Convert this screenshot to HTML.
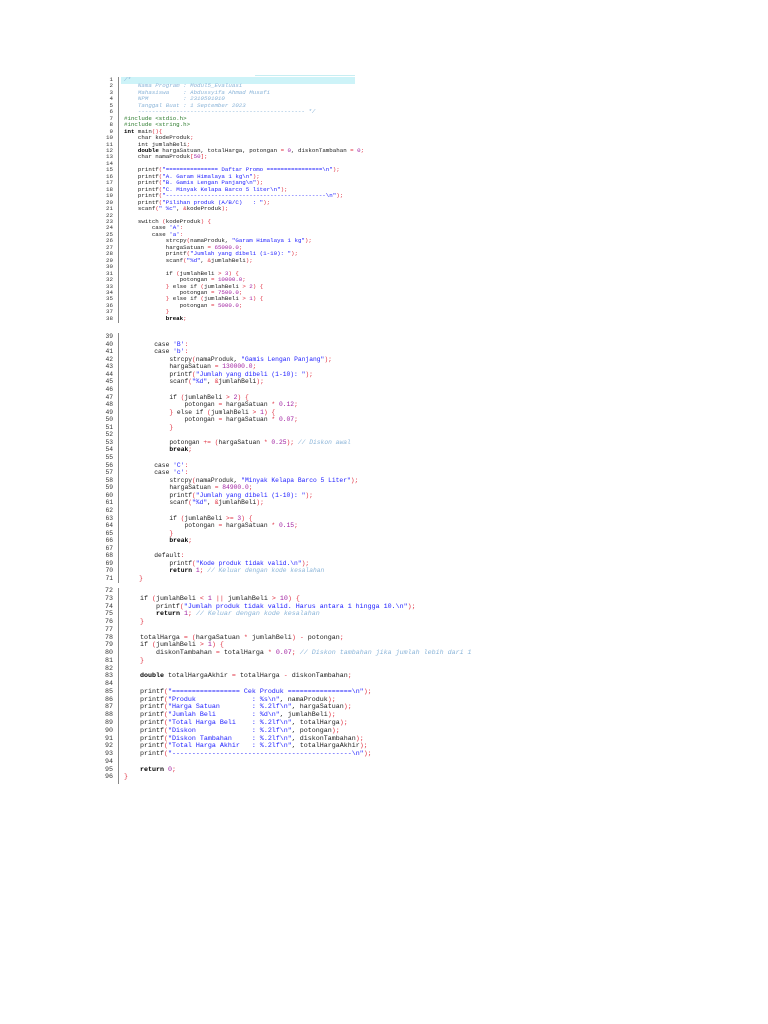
<!DOCTYPE html>
<html><head><meta charset="utf-8"><style>
html,body{margin:0;padding:0;background:#fff;width:768px;height:1024px;overflow:hidden}
.blk{position:absolute;left:100px;font-family:"Liberation Mono",monospace;color:#1a1a1a;white-space:pre}
.ln{position:absolute;left:0;top:0;width:13px;text-align:right;color:#333}
.code{position:absolute;left:24px;top:0}
.gut{position:absolute;left:18px;width:1px;background:#888}
.s{color:#1a1aff}.c{color:#8ab4d8;font-style:italic}.n{color:#a020a0}.r{color:#e03040}.p{color:#2a7a2a}.k{color:#000;font-weight:bold}
</style></head><body>

<div style="position:absolute;left:255px;top:75px;width:100px;height:1px;background:#c8eef2"></div>
<div style="position:absolute;left:121px;top:77px;width:234px;height:7px;background:#cdf3f8"></div>

<div class="blk" style="top:77px;font-size:5.8px;line-height:6.46px"><div class="gut" style="top:0;height:246px"></div><div class="ln">1
2
3
4
5
6
7
8
9
10
11
12
13
14
15
16
17
18
19
20
21
22
23
24
25
26
27
28
29
30
31
32
33
34
35
36
37
38</div><div class="code"><span class="c">/*
    Nama Program : Modul5_Evaluasi
    Mahasiswa    : Abdussyifa Ahmad Musafi
    NPM          : 2310501010
    Tanggal Buat : 1 September 2023
    ------------------------------------------------ */</span>
<span class="p">#include &lt;stdio.h&gt;
#include &lt;string.h&gt;</span>
<span class="k">int</span> main<span class="r">(){</span>
    char kodeProduk<span class="r">;</span>
    int jumlahBeli<span class="r">;</span>
    <span class="k">double</span> hargaSatuan, totalHarga, potongan <span class="r">=</span> <span class="n">0</span>, diskonTambahan <span class="r">=</span> <span class="n">0</span><span class="r">;</span>
    char namaProduk<span class="r">[</span><span class="n">50</span><span class="r">];</span>

    printf<span class="r">(</span><span class="s">"=============== Daftar Promo ================\n"</span><span class="r">);</span>
    printf<span class="r">(</span><span class="s">"A. Garam Himalaya 1 kg\n"</span><span class="r">);</span>
    printf<span class="r">(</span><span class="s">"B. Gamis Lengan Panjang\n"</span><span class="r">);</span>
    printf<span class="r">(</span><span class="s">"C. Minyak Kelapa Barco 5 liter\n"</span><span class="r">);</span>
    printf<span class="r">(</span><span class="s">"----------------------------------------------\n"</span><span class="r">);</span>
    printf<span class="r">(</span><span class="s">"Pilihan produk (A/B/C)   : "</span><span class="r">);</span>
    scanf<span class="r">(</span><span class="s">" %c"</span>, <span class="r">&amp;</span>kodeProduk<span class="r">);</span>

    switch <span class="r">(</span>kodeProduk<span class="r">) {</span>
        case <span class="s">'A'</span><span class="r">:</span>
        case <span class="s">'a'</span><span class="r">:</span>
            strcpy<span class="r">(</span>namaProduk, <span class="s">"Garam Himalaya 1 kg"</span><span class="r">);</span>
            hargaSatuan <span class="r">=</span> <span class="n">65000.0</span><span class="r">;</span>
            printf<span class="r">(</span><span class="s">"Jumlah yang dibeli (1-10): "</span><span class="r">);</span>
            scanf<span class="r">(</span><span class="s">"%d"</span>, <span class="r">&amp;</span>jumlahBeli<span class="r">);</span>

            if <span class="r">(</span>jumlahBeli <span class="r">&gt;</span> <span class="n">3</span><span class="r">) {</span>
                potongan <span class="r">=</span> <span class="n">10000.0</span><span class="r">;</span>
            <span class="r">}</span> else if <span class="r">(</span>jumlahBeli <span class="r">&gt;</span> <span class="n">2</span><span class="r">) {</span>
                potongan <span class="r">=</span> <span class="n">7500.0</span><span class="r">;</span>
            <span class="r">}</span> else if <span class="r">(</span>jumlahBeli <span class="r">&gt;</span> <span class="n">1</span><span class="r">) {</span>
                potongan <span class="r">=</span> <span class="n">5000.0</span><span class="r">;</span>
            <span class="r">}</span>
            <span class="k">break</span><span class="r">;</span></div></div>

<div class="blk" style="top:333px;font-size:6.3px;line-height:7.56px"><div class="gut" style="top:0;height:250px"></div><div class="ln">39
40
41
42
43
44
45
46
47
48
49
50
51
52
53
54
55
56
57
58
59
60
61
62
63
64
65
66
67
68
69
70
71</div><div class="code"> 
        case <span class="s">'B'</span><span class="r">:</span>
        case <span class="s">'b'</span><span class="r">:</span>
            strcpy<span class="r">(</span>namaProduk, <span class="s">"Gamis Lengan Panjang"</span><span class="r">);</span>
            hargaSatuan <span class="r">=</span> <span class="n">130000.0</span><span class="r">;</span>
            printf<span class="r">(</span><span class="s">"Jumlah yang dibeli (1-10): "</span><span class="r">);</span>
            scanf<span class="r">(</span><span class="s">"%d"</span>, <span class="r">&amp;</span>jumlahBeli<span class="r">);</span>

            if <span class="r">(</span>jumlahBeli <span class="r">&gt;</span> <span class="n">2</span><span class="r">) {</span>
                potongan <span class="r">=</span> hargaSatuan <span class="r">*</span> <span class="n">0.12</span><span class="r">;</span>
            <span class="r">}</span> else if <span class="r">(</span>jumlahBeli <span class="r">&gt;</span> <span class="n">1</span><span class="r">) {</span>
                potongan <span class="r">=</span> hargaSatuan <span class="r">*</span> <span class="n">0.07</span><span class="r">;</span>
            <span class="r">}</span>

            potongan <span class="r">+=</span> <span class="r">(</span>hargaSatuan <span class="r">*</span> <span class="n">0.25</span><span class="r">);</span> <span class="c">// Diskon awal</span>
            <span class="k">break</span><span class="r">;</span>

        case <span class="s">'C'</span><span class="r">:</span>
        case <span class="s">'c'</span><span class="r">:</span>
            strcpy<span class="r">(</span>namaProduk, <span class="s">"Minyak Kelapa Barco 5 Liter"</span><span class="r">);</span>
            hargaSatuan <span class="r">=</span> <span class="n">84900.0</span><span class="r">;</span>
            printf<span class="r">(</span><span class="s">"Jumlah yang dibeli (1-10): "</span><span class="r">);</span>
            scanf<span class="r">(</span><span class="s">"%d"</span>, <span class="r">&amp;</span>jumlahBeli<span class="r">);</span>

            if <span class="r">(</span>jumlahBeli <span class="r">&gt;=</span> <span class="n">3</span><span class="r">) {</span>
                potongan <span class="r">=</span> hargaSatuan <span class="r">*</span> <span class="n">0.15</span><span class="r">;</span>
            <span class="r">}</span>
            <span class="k">break</span><span class="r">;</span>

        default<span class="r">:</span>
            printf<span class="r">(</span><span class="s">"Kode produk tidak valid.\n"</span><span class="r">);</span>
            <span class="k">return</span> <span class="n">1</span><span class="r">;</span> <span class="c">// Keluar dengan kode kesalahan</span>
    <span class="r">}</span></div></div>

<div class="blk" style="top:588px;font-size:6.67px;line-height:7.76px"><div class="gut" style="top:0;height:196px"></div><div class="ln">72
73
74
75
76
77
78
79
80
81
82
83
84
85
86
87
88
89
90
91
92
93
94
95
96</div><div class="code"> 
    if <span class="r">(</span>jumlahBeli <span class="r">&lt;</span> <span class="n">1</span> <span class="r">||</span> jumlahBeli <span class="r">&gt;</span> <span class="n">10</span><span class="r">) {</span>
        printf<span class="r">(</span><span class="s">"Jumlah produk tidak valid. Harus antara 1 hingga 10.\n"</span><span class="r">);</span>
        <span class="k">return</span> <span class="n">1</span><span class="r">;</span> <span class="c">// Keluar dengan kode kesalahan</span>
    <span class="r">}</span>

    totalHarga <span class="r">=</span> <span class="r">(</span>hargaSatuan <span class="r">*</span> jumlahBeli<span class="r">)</span> <span class="r">-</span> potongan<span class="r">;</span>
    if <span class="r">(</span>jumlahBeli <span class="r">&gt;</span> <span class="n">1</span><span class="r">) {</span>
        diskonTambahan <span class="r">=</span> totalHarga <span class="r">*</span> <span class="n">0.07</span><span class="r">;</span> <span class="c">// Diskon tambahan jika jumlah lebih dari 1</span>
    <span class="r">}</span>

    <span class="k">double</span> totalHargaAkhir <span class="r">=</span> totalHarga <span class="r">-</span> diskonTambahan<span class="r">;</span>

    printf<span class="r">(</span><span class="s">"================= Cek Produk ================\n"</span><span class="r">);</span>
    printf<span class="r">(</span><span class="s">"Produk              : %s\n"</span>, namaProduk<span class="r">);</span>
    printf<span class="r">(</span><span class="s">"Harga Satuan        : %.2lf\n"</span>, hargaSatuan<span class="r">);</span>
    printf<span class="r">(</span><span class="s">"Jumlah Beli         : %d\n"</span>, jumlahBeli<span class="r">);</span>
    printf<span class="r">(</span><span class="s">"Total Harga Beli    : %.2lf\n"</span>, totalHarga<span class="r">);</span>
    printf<span class="r">(</span><span class="s">"Diskon              : %.2lf\n"</span>, potongan<span class="r">);</span>
    printf<span class="r">(</span><span class="s">"Diskon Tambahan     : %.2lf\n"</span>, diskonTambahan<span class="r">);</span>
    printf<span class="r">(</span><span class="s">"Total Harga Akhir   : %.2lf\n"</span>, totalHargaAkhir<span class="r">);</span>
    printf<span class="r">(</span><span class="s">"---------------------------------------------\n"</span><span class="r">);</span>

    <span class="k">return</span> <span class="n">0</span><span class="r">;</span>
<span class="r">}</span></div></div>
</body></html>
